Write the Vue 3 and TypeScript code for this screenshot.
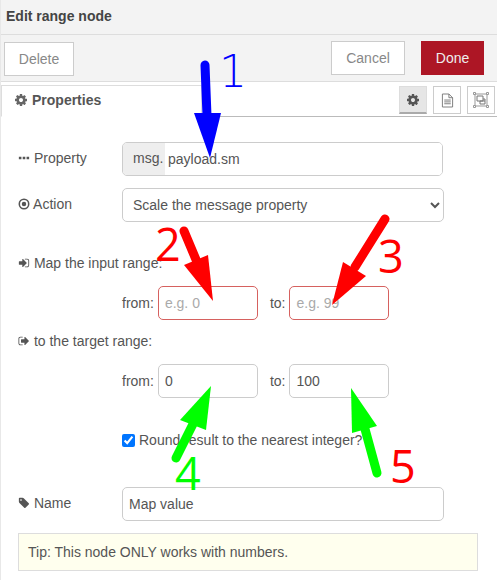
<template>
  <div class="tray">
    <div class="tray-title">Edit range node</div>
    <div class="tray-toolbar">
      <button class="btn btn-delete">Delete</button>
      <div class="toolbar-right">
        <button class="btn">Cancel</button>
        <button class="btn btn-primary">Done</button>
      </div>
    </div>

    <div class="tabs">
      <div class="tab">
        <svg class="icon" viewBox="0 0 1792 1792"><path fill-rule="evenodd" :d="cogPath" /></svg>
        <span>Properties</span>
      </div>
      <div class="tab-buttons">
        <button class="tab-btn active">
          <svg class="icon" viewBox="0 0 1792 1792"><path fill-rule="evenodd" :d="cogPath" /></svg>
        </button>
        <button class="tab-btn">
          <svg class="tab-svg" viewBox="0 0 14 16" fill="none" stroke="#777" stroke-width="1">
            <path d="M1.5 1h7l4 4v10h-11zM8.5 1v4h4M3.5 7.5h7M3.5 9.5h7M3.5 11.5h7" />
          </svg>
        </button>
        <button class="tab-btn">
          <svg class="tab-svg wide" viewBox="0 0 16 16" fill="none" stroke="#999" stroke-width="1">
            <path d="M2 2h12v12h-12z" />
            <path d="M4 4h6v5h-6zM7 9h5v3h-5zM10 7h2v2" stroke="#777" />
            <path d="M0.5 0.5h2v2h-2zM13.5 0.5h2v2h-2zM0.5 13.5h2v2h-2zM13.5 13.5h2v2h-2z" fill="#fff" />
          </svg>
        </button>
      </div>
    </div>

    <div class="form">
      <div class="row row-property">
        <label class="label">
          <svg class="icon" viewBox="0 0 14 14"><path d="M1 5.5h3v3h-3zM5.5 5.5h3v3h-3zM10 5.5h3v3h-3z" /></svg>
          Property
        </label>
        <div class="typed-input">
          <span class="typed-prefix">msg.</span>
          <input class="typed-value" type="text" value="payload.sm" />
        </div>
      </div>

      <div class="row row-action">
        <label class="label">
          <svg class="icon" viewBox="0 0 14 14">
            <circle cx="7" cy="7" r="5.5" fill="none" stroke="#555" stroke-width="1.8" />
            <circle cx="7" cy="7" r="2.6" />
          </svg>
          Action
        </label>
        <select class="select">
          <option>Scale the message property</option>
        </select>
      </div>

      <div class="section-label section-input">
        <svg class="icon" viewBox="0 0 1792 1792"><path :d="signInPath" /></svg>
        Map the input range:
      </div>
      <div class="range-row">
        <span>from:</span>
        <input class="field field-error" type="text" placeholder="e.g. 0" />
        <span class="to">to:</span>
        <input class="field field-error" type="text" placeholder="e.g. 99" />
      </div>

      <div class="section-label section-target">
        <svg class="icon" viewBox="0 0 1792 1792"><path :d="signOutPath" /></svg>
        to the target range:
      </div>
      <div class="range-row">
        <span>from:</span>
        <input class="field" type="text" value="0" />
        <span class="to">to:</span>
        <input class="field" type="text" value="100" />
      </div>

      <label class="check-row">
        <input type="checkbox" checked />
        <span>Round result to the nearest integer?</span>
      </label>

      <div class="row row-name">
        <label class="label">
          <svg class="icon" viewBox="0 0 1792 1792"><path fill-rule="evenodd" :d="tagPath" /></svg>
          Name
        </label>
        <input class="field field-wide" type="text" value="Map value" />
      </div>

      <div class="tip">Tip: This node ONLY works with numbers.</div>
    </div>

    <svg class="annotations" viewBox="0 0 497 580">
      <g v-for="a in arrows" :key="a.num">
        <line :x1="a.tail[0]" :y1="a.tail[1]" :x2="a.neck[0]" :y2="a.neck[1]" :stroke="a.color" stroke-width="9" stroke-linecap="round" />
        <polygon :points="a.head" :fill="a.color" />
        <text :x="a.at[0]" :y="a.at[1]" :fill="a.numColor" :class="a.num === 1 ? 'num num-one' : 'num'">{{ a.num }}</text>
      </g>
    </svg>
  </div>
</template>

<script setup lang="ts">
interface Arrow {
  num: number;
  color: string;
  numColor: string;
  tail: [number, number];
  neck: [number, number];
  head: string;
  at: [number, number];
}

const cogPath =
  "M1152 896q0-106-75-181t-181-75-181 75-75 181 75 181 181 75 181-75 75-181zm512-109v222q0 12-8 23t-20 13l-185 28q-19 54-39 91 35 50 107 138 10 12 10 25t-9 23q-27 37-99 108t-94 71q-12 0-26-9l-138-108q-44 23-91 38-16 136-29 186-7 28-36 28h-222q-14 0-24.5-8.5t-11.5-21.5l-28-184q-49-16-90-37l-141 107q-10 9-25 9-14 0-25-11-126-114-165-168-7-10-7-23 0-12 8-23 15-21 51-66.5t54-70.5q-27-50-41-99l-183-27q-13-2-21-12.5t-8-23.5v-222q0-12 8-23t19-13l186-28q14-46 39-92-40-57-107-138-10-12-10-24 0-10 9-23 26-36 98.5-107.5t94.5-71.5q13 0 26 10l138 107q44-23 91-38 16-136 29-186 7-28 36-28h222q14 0 24.5 8.5t11.5 21.5l28 184q49 16 90 37l142-107q9-9 24-9 13 0 25 10 129 119 165 170 7 8 7 22 0 12-8 23-15 21-51 66.5t-54 70.5q26 50 41 98l183 28q13 2 21 12.5t8 23.5z";
const signInPath =
  "M1312 896q0 26-19 45l-544 544q-19 19-45 19t-45-19-19-45v-288h-448q-26 0-45-19t-19-45v-384q0-26 19-45t45-19h448v-288q0-26 19-45t45-19 45 19l544 544q19 19 19 45zm352-352v704q0 119-84.5 203.5t-203.5 84.5h-320q-13 0-22.5-9.5t-9.5-22.5q0-4-1-20t-.5-26.5 3-23.5 10-19.5 20.5-6.5h320q66 0 113-47t47-113v-704q0-66-47-113t-113-47h-312l-11.5-1-11.5-3-8-5.5-7-9-2-13.5q0-4-1-20t-.5-26.5 3-23.5 10-19.5 20.5-6.5h320q119 0 203.5 84.5t84.5 203.5z";
const signOutPath =
  "M704 1440q0 4 1 20t.5 26.5-3 23.5-10 19.5-20.5 6.5h-320q-119 0-203.5-84.5t-84.5-203.5v-704q0-119 84.5-203.5t203.5-84.5h320q13 0 22.5 9.5t9.5 22.5q0 4 1 20t.5 26.5-3 23.5-10 19.5-20.5 6.5h-320q-66 0-113 47t-47 113v704q0 66 47 113t113 47h312l11.5 1 11.5 3 8 5.5 7 9 2 13.5zm928-544q0 26-19 45l-544 544q-19 19-45 19t-45-19-19-45v-288h-448q-26 0-45-19t-19-45v-384q0-26 19-45t45-19h448v-288q0-26 19-45t45-19 45 19l544 544q19 19 19 45z";
const tagPath =
  "M576 448q0-53-37.5-90.5t-90.5-37.5-90.5 37.5-37.5 90.5 37.5 90.5 90.5 37.5 90.5-37.5 37.5-90.5zm1067 576q0 53-37 90l-491 492q-39 37-91 37-53 0-90-37l-715-716q-38-37-64.5-101t-26.5-117v-416q0-52 38-90t90-38h416q53 0 117 26.5t102 64.5l715 714q37 39 37 91z";

const arrows: Arrow[] = [
  { num: 1, color: "#0000ff", numColor: "#0000ff", tail: [205, 65], neck: [207, 116], head: "194,113 221,113 210,158", at: [219, 87] },
  { num: 2, color: "#ff0000", numColor: "#ff0000", tail: [184, 231], neck: [197, 262], head: "184,265 208,255 213,301", at: [155, 261] },
  { num: 3, color: "#ff0000", numColor: "#ff0000", tail: [385, 219], neck: [355, 267], head: "343,262 366,276 332,305", at: [378, 273] },
  { num: 4, color: "#00ff00", numColor: "#00ff00", tail: [176, 458], neck: [193, 424], head: "180,420 206,430 211,386", at: [175, 490] },
  { num: 5, color: "#00ff00", numColor: "#ff0000", tail: [377, 473], neck: [365, 429], head: "352,433 377,426 351,388", at: [390, 483] }
];
</script>

<style>
html, body { margin: 0; padding: 0; overflow: hidden; background: #fff; }
</style>

<style scoped>
.tray {
  position: relative;
  width: 497px;
  height: 580px;
  overflow: hidden;
  background: #fff;
  color: #555;
  font-family: "Liberation Sans", Arial, sans-serif;
  font-size: 14px;
  box-sizing: border-box;
  border-left: 1px solid #e8e8e8;
}
.tray-title {
  height: 34px;
  line-height: 33px;
  padding-left: 6px;
  margin-left: -1px;
  font-weight: bold;
  color: #444;
  background: #f3f3f3;
  border-bottom: 1px solid #ddd;
}
.tray-toolbar {
  display: flex;
  justify-content: space-between;
  margin-left: -1px;
  padding: 6px 13px 0 4px;
  box-sizing: border-box;
  background: #f3f3f3;
  border-bottom: 1px solid #ddd;
  height: 47px;
}
.toolbar-right { display: flex; gap: 16px; }
.btn {
  height: 34px;
  padding: 0;
  width: 74px;
  background: #fff;
  border: 1px solid #ccc;
  color: #888;
  font: 14px "Liberation Sans", Arial, sans-serif;
}
.btn-delete { width: 70px; margin-top: 1px; }
.btn-primary {
  width: 63px;
  background: #ad1625;
  border-color: #ad1625;
  color: #eee;
}

.tabs {
  display: flex;
  justify-content: space-between;
  align-items: flex-end;
  height: 35px;
  box-sizing: border-box;
  padding-right: 2px;
  border-bottom: 1px solid #bbb;
}
.tab {
  display: flex;
  align-items: center;
  gap: 4px;
  width: 201px;
  height: 32px;
  margin-bottom: -1px;
  padding-left: 12px;
  box-sizing: border-box;
  background: #fff;
  border: 1px solid #ddd;
  border-bottom: 1px solid #fff;
  font-weight: bold;
  padding-bottom: 3px;
}
.tab-buttons { display: flex; gap: 6px; margin-bottom: 2px; }
.tab-btn {
  display: flex;
  align-items: center;
  justify-content: center;
  width: 28px;
  height: 28px;
  padding: 0;
  background: #fff;
  border: 1px solid #ccc;
}
.tab-btn.active {
  background: #e6e6e6;
  border-color: #ddd;
  border-bottom: 2px solid #aaa;
}
.tab-svg { width: 13px; height: 15px; }
.tab-svg.wide { width: 16px; height: 16px; }

.icon { width: 14px; height: 14px; fill: #555; flex: none; vertical-align: -2px; }
.tab .icon { fill: #666; }
.label .icon, .section-label .icon { width: 12px; height: 12px; vertical-align: -1px; }

.form { padding: 0 0 0 17px; }
.row { display: flex; align-items: center; }
.row-property { margin-top: 25px; }
.row-action { margin-top: 12px; }
.row-name { margin-top: 37px; }
.label { width: 104px; flex: none; padding-bottom: 2px; box-sizing: border-box; }

.typed-input {
  display: flex;
  width: 321px;
  height: 34px;
  box-sizing: border-box;
  border: 1px solid #ccc;
  border-radius: 5px;
  overflow: hidden;
}
.typed-prefix {
  width: 42px;
  flex: none;
  line-height: 30px;
  padding-left: 10px;
  box-sizing: border-box;
  background: #eee;
}
.typed-value {
  flex: 1;
  min-width: 0;
  border: none;
  outline: none;
  padding: 0 3px;
  color: #555;
  font: 14px "Liberation Sans", Arial, sans-serif;
}
.select {
  width: 322px;
  height: 34px;
  padding: 0 6px;
  background: #fff;
  border: 1px solid #ccc;
  border-radius: 5px;
  color: #555;
  font: 14px "Liberation Sans", Arial, sans-serif;
}
.section-label { height: 20px; line-height: 20px; }
.section-input { margin-top: 31px; }
.section-target { margin-top: 11px; }
.range-row {
  display: flex;
  align-items: center;
  gap: 4px;
  padding-left: 104px;
  margin-top: 13px;
}
.to { margin-left: 8px; }
.field {
  width: 100px;
  height: 34px;
  padding: 0 6px;
  box-sizing: border-box;
  background: #fff;
  border: 1px solid #ccc;
  border-radius: 5px;
  outline: none;
  color: #555;
  font: 14px "Liberation Sans", Arial, sans-serif;
}
.field-error { border-color: #d6615f; }
.field::placeholder { color: #aaa; }
.field-wide { width: 322px; }
.check-row {
  display: flex;
  align-items: center;
  gap: 4px;
  height: 20px;
  margin: 32px 0 0 104px;
}
.check-row input { width: 13px; height: 13px; margin: 0; }
.tip {
  width: 460px;
  height: 38px;
  line-height: 36px;
  margin-top: 12px;
  padding-left: 9px;
  box-sizing: border-box;
  background: #ffe;
  border: 1px solid #ddd;
}

.annotations {
  position: absolute;
  left: -1px;
  top: 0;
  width: 497px;
  height: 580px;
  pointer-events: none;
}
.num { font-family: "Open Sans", sans-serif; font-size: 45px; }
.num-one { font-family: "DejaVu Sans", sans-serif; font-size: 44px; font-weight: 200; }
</style>
